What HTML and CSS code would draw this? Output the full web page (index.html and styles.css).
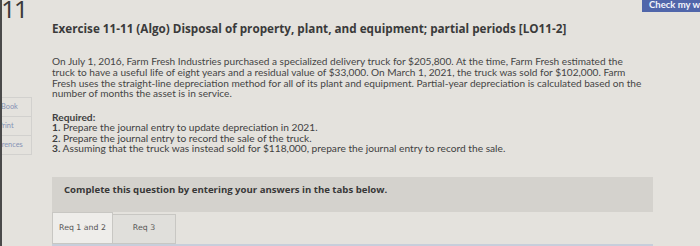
FILE: index.html
```html
<!DOCTYPE html>
<html>
<head>
<meta charset="utf-8">
<link rel="stylesheet" href="styles.css">
</head>
<body>
<div class="page">
  <aside class="rail">
    <div class="num">11</div>
    <ul class="tools">
      <li class="tool-book">Book</li>
      <li class="tool-print">Print</li>
      <li class="tool-refs">References</li>
    </ul>
  </aside>
  <main class="main">
    <div class="topbar"><button class="check">Check my work</button></div>
    <div class="sheet">
      <h1 class="title">Exercise 11-11 (Algo) Disposal of property, plant, and equipment; partial periods [LO11-2]</h1>
      <p class="intro">On July 1, 2016, Farm Fresh Industries purchased a specialized delivery truck for $205,800. At the time, Farm Fresh estimated the<br>truck to have a useful life of eight years and a residual value of $33,000. On March 1, 2021, the truck was sold for $102,000. Farm<br>Fresh uses the straight-line depreciation method for all of its plant and equipment. Partial-year depreciation is calculated based on the<br>number of months the asset is in service.</p>
      <div class="required">
        <div class="req-head">Required:</div>
        <ol class="req-list">
          <li><b>1.</b> Prepare the journal entry to update depreciation in 2021.</li>
          <li><b>2.</b> Prepare the journal entry to record the sale of the truck.</li>
          <li><b>3.</b> Assuming that the truck was instead sold for $118,000, prepare the journal entry to record the sale.</li>
        </ol>
      </div>
      <div class="notice">Complete this question by entering your answers in the tabs below.</div>
      <div class="tabs">
        <div class="tab active">Req 1 and 2</div>
        <div class="tab">Req 3</div>
      </div>
      <div class="panel"></div>
    </div>
  </main>
</div>
</body>
</html>
```
FILE: styles.css
```css
html, body {
  margin: 0;
  padding: 0;
  height: 100%;
}
body {
  background: #e4e2dd;
  font-family: "Lato", "Open Sans", sans-serif;
  color: #3c3c3c;
  overflow: hidden;
}
.page {
  display: flex;
  height: 246px;
  border-left: 2px solid #4a4a4a;
}
.rail {
  width: 34px;
  flex: none;
  display: flex;
  flex-direction: column;
  overflow: hidden;
}
.num {
  font-family: "Open Sans", sans-serif;
  font-size: 26px;
  line-height: 20px;
  height: 19px;
  margin-left: -1px;
  margin-top: -1px;
  color: #3a3a3a;
  letter-spacing: -2px;
  overflow: hidden;
}
.tools {
  list-style: none;
  margin: 79px 0 0 -4px;
  padding: 0;
  width: 34px;
}
.tools li {
  height: 18px;
  line-height: 18px;
  border: 1px solid #d2d1ce;
  border-top: none;
  border-left: none;
  font-size: 7.4px;
  color: #8692b5;
  white-space: nowrap;
  overflow: hidden;
}
.tools li:first-child {
  border-top: 1px solid #d2d1ce;
}
.tool-book { text-indent: 3px; }
.tool-print { text-indent: 0; }
.tool-refs { text-indent: -11px; }
.main {
  flex: 1;
  min-width: 0;
  display: flex;
  flex-direction: column;
}
.topbar {
  height: 11px;
  display: flex;
  justify-content: flex-end;
}
.check {
  margin: -4px -24px 0 0;
  height: 16px;
  padding: 0 10px 0 7px;
  border: none;
  background: #5066aa;
  color: #f2f4fb;
  font-family: "Lato", sans-serif;
  font-size: 9.5px;
  font-weight: 700;
}
.sheet {
  padding-left: 16px;
}
.title {
  margin: 10px 0 0 0;
  font-family: "Open Sans", sans-serif;
  font-size: 11.7px;
  font-weight: 700;
  color: #3a3a3a;
  line-height: 15px;
  white-space: nowrap;
}
.intro {
  margin: 20px 0 0 0;
  font-size: 10.1px;
  line-height: 10.8px;
  color: #454545;
  white-space: nowrap;
}
.required {
  margin-top: 12.5px;
  font-size: 10.2px;
  line-height: 10.6px;
  color: #3f3f3f;
}
.req-head {
  font-weight: 700;
}
.req-list {
  list-style: none;
  margin: 0;
  padding: 0;
}
.notice {
  margin-top: 23px;
  width: 601px;
  height: 35px;
  box-sizing: border-box;
  padding: 6px 0 0 12px;
  background: #d4d2cd;
  font-family: "Open Sans", sans-serif;
  font-size: 9.6px;
  line-height: 13px;
  font-weight: 700;
  color: #383838;
}
.tabs {
  display: flex;
  margin-top: 0;
}
.tab {
  height: 32px;
  box-sizing: border-box;
  padding: 9.5px 0 0 0;
  text-align: center;
  font-family: "DejaVu Sans", sans-serif;
  font-size: 7.8px;
  color: #555;
  border: 1px solid #c8c7c3;
  background: #e0dfdb;
}
.tab:first-child {
  width: 61px;
  background: #eeedea;
}
.tab + .tab {
  width: 63px;
  border-left: none;
  margin-top: 2px;
  height: 30px;
  padding-top: 7.5px;
}
.panel {
  height: 3px;
  width: 601px;
  background: #c7cedb;
}
```
